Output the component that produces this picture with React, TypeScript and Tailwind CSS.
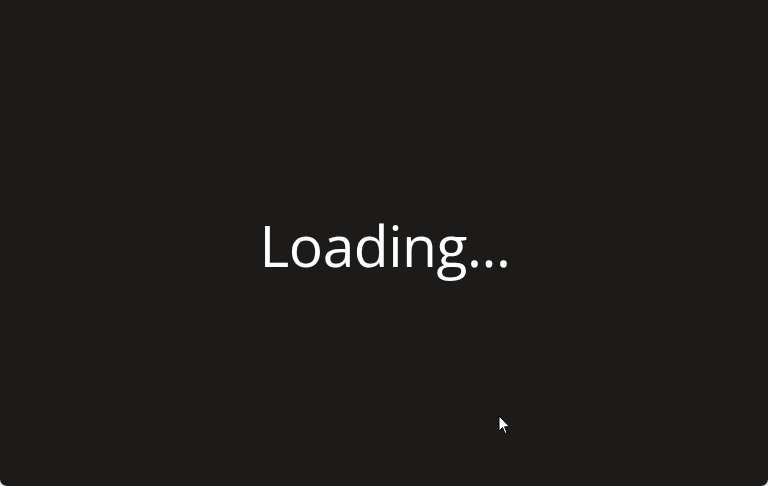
import React from 'react';

const Cursor: React.FC = () => (
  <svg width="13" height="20" viewBox="0 0 13 20" className="absolute left-[498px] top-[415px]">
    <path d="M1 1 L1 16 L4.5 12.5 L7 18.5 L9 17.6 L6.6 11.8 L11.5 11.8 Z" fill="#ffffff" stroke="#000000" strokeWidth="1" strokeLinejoin="round" />
  </svg>
);

const App: React.FC = () => {
  return (
    <div className="w-[768px] h-[486px] bg-[#e8e8e8]">
      <div className="relative w-full h-full bg-[#1c1b1a] rounded-b-[7px] flex items-center justify-center">
        <span
          className="text-white text-[57px] leading-none tracking-[-0.5px] mt-[4px] ml-[2px]"
          style={{ fontFamily: '"Open Sans", "Noto Sans", sans-serif' }}
        >
          Loading...
        </span>
        <Cursor />
      </div>
    </div>
  );
};

export default App;
